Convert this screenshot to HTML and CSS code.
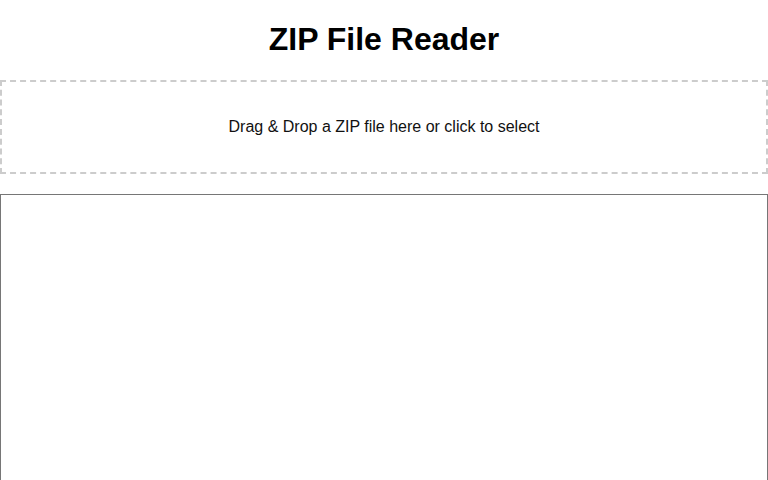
FILE: index.html
```html
<!DOCTYPE html>
<html lang="en">
<head>
<meta charset="utf-8">
<title>ZIP File Reader</title>
<link rel="stylesheet" href="styles.css">
</head>
<body>
  <h1 class="title">ZIP File Reader</h1>
  <div class="drop-zone">Drag &amp; Drop a ZIP file here or click to select</div>
  <div class="file-list"></div>
</body>
</html>
```

FILE: styles.css
```css
body {
  margin: 0;
  font-family: "Liberation Sans", Arial, sans-serif;
  color: #000;
  background: #fff;
}

.title {
  font-size: 32px;
  font-weight: bold;
  text-align: center;
  margin: 21.44px 0;
}

.drop-zone {
  box-sizing: border-box;
  width: 100%;
  border: 2px dashed #ccc;
  padding: 36px 0;
  line-height: 18px;
  font-size: 16px;
  text-align: center;
  color: #111;
  margin-bottom: 20px;
  cursor: pointer;
}

.file-list {
  box-sizing: border-box;
  width: 100%;
  height: 400px;
  border: 1px solid #767676;
}
```
